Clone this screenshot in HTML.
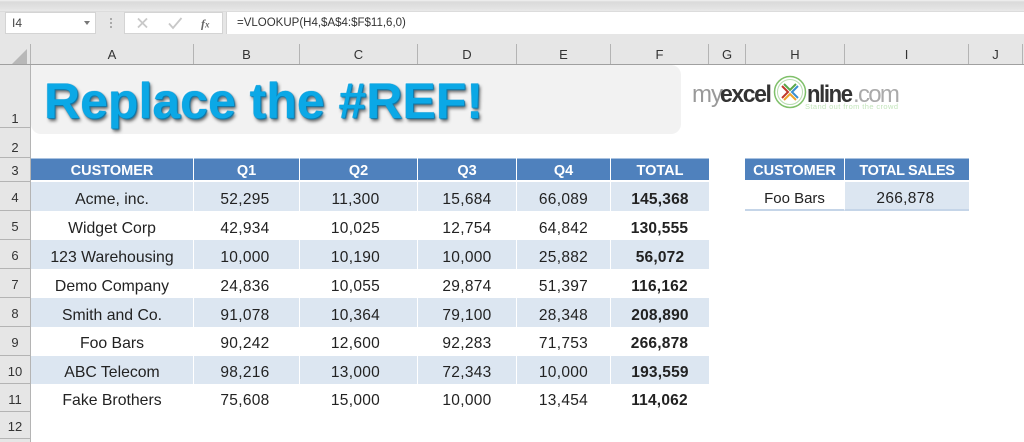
<!DOCTYPE html>
<html><head><meta charset="utf-8">
<style>
html,body{margin:0;padding:0;background:#fff}
body{width:1024px;height:442px;position:relative;overflow:hidden;font-family:"Liberation Sans",sans-serif;color:#222}
.a{position:absolute}
.ch{position:absolute;top:44px;height:20px;line-height:21px;text-align:center;font-size:13px;color:#333;border-right:1px solid #b4b4b4;box-sizing:border-box}
.rh{position:absolute;left:0;width:30px;text-align:center;font-size:13px;color:#333;border-bottom:1px solid #b4b4b4;box-sizing:border-box;background:#e6e6e6}
table{position:absolute;border-collapse:separate;border-spacing:0;table-layout:fixed}
td{padding:6px 0 0;text-align:center;font-size:15.8px;height:29px;border-right:1px solid #fff;border-bottom:0;box-sizing:border-box;white-space:nowrap;color:#222}
tr.h td{background:#4f81bd;color:#fff;font-weight:bold;height:24px;padding-top:4px;font-size:14.5px;border-bottom:2px solid #fff;box-shadow:inset 0 1px 0 #a9c2e0}
tr.b td{background:#dce6f1}
tr.u td{padding-top:4px}
tr.s td{height:28px;padding-top:5px}
td.n{font-size:15.5px;letter-spacing:.3px}
td.t{font-size:15.5px;font-weight:bold;letter-spacing:.2px}
td:nth-child(2).n{padding-right:3px}
td:nth-child(3).n{padding-right:6px}
</style></head>
<body>
<div class="a" style="left:0;top:0;width:1024px;height:65px;background:#e6e6e6"></div>
<div class="a" style="left:0;top:0;width:1024px;height:12px;background:linear-gradient(#f2f2f2 0,#dadada 2px,#e2e2e2 8px,#e9e9e9 11px,#cfcfcf 12px)"></div>
<div class="a" style="left:5px;top:12px;width:91px;height:22px;background:#fff;border:1px solid #d4d4d4;box-sizing:border-box;font-size:12px;line-height:21px;padding-left:6px;color:#444">I4</div>
<div class="a" style="left:84px;top:21px;width:0;height:0;border-left:3.5px solid transparent;border-right:3.5px solid transparent;border-top:4px solid #777"></div>
<div class="a" style="left:110px;top:18px;width:2px;height:2px;background:#aaa;box-shadow:0 4px 0 #aaa,0 8px 0 #aaa"></div>
<div class="a" style="left:124px;top:12px;width:99px;height:22px;background:#fff;border:1px solid #d4d4d4;box-sizing:border-box"></div>
<svg class="a" style="left:124px;top:12px" width="99" height="22" fill="none"><path d="M14 6.500L23 15.500M23 6.500L14 15.500" stroke="#c8c8c8" stroke-width="1.800"/><path d="M45 11.500L49 16L57.500 6" stroke="#c8c8c8" stroke-width="1.800"/><text x="77" y="15.500" font-family="Liberation Serif,serif" font-style="italic" font-weight="bold" font-size="12" fill="#666">f<tspan font-size="9">x</tspan></text></svg>
<div class="a" style="left:226px;top:12px;width:798px;height:22px;background:#fff;border-left:1px solid #d4d4d4;box-sizing:border-box;font-size:11.500px;line-height:22px;padding-left:10px;color:#333;white-space:nowrap">=VLOOKUP(H4,$A$4:$F$11,6,0)</div>

<svg class="a" style="left:0;top:44px" width="31" height="21"><path d="M12 20H27V5Z" fill="#b8b8b8"/></svg>
<div class="a" style="left:30px;top:44px;width:1px;height:20px;background:#b4b4b4"></div>
<div class="ch" style="left:31px;width:163px">A</div>
<div class="ch" style="left:194px;width:106px">B</div>
<div class="ch" style="left:300px;width:118px">C</div>
<div class="ch" style="left:418px;width:99px">D</div>
<div class="ch" style="left:517px;width:94px">E</div>
<div class="ch" style="left:611px;width:98px">F</div>
<div class="ch" style="left:709px;width:37px">G</div>
<div class="ch" style="left:746px;width:99px">H</div>
<div class="ch" style="left:845px;width:124px">I</div>
<div class="ch" style="left:969px;width:54px">J</div>
<div class="a" style="left:0;top:64px;width:1024px;height:1px;background:#a0a0a0"></div>

<div class="rh" style="top:65px;height:63px;line-height:107px">1</div>
<div class="rh" style="top:128px;height:30px;line-height:40px">2</div>
<div class="rh" style="top:158px;height:24px;line-height:25px">3</div>
<div class="rh" style="top:182px;height:29px;line-height:32px">4</div>
<div class="rh" style="top:211px;height:29px;line-height:32px">5</div>
<div class="rh" style="top:240px;height:29px;line-height:32px">6</div>
<div class="rh" style="top:269px;height:29px;line-height:32px">7</div>
<div class="rh" style="top:298px;height:29px;line-height:32px">8</div>
<div class="rh" style="top:327px;height:29px;line-height:32px">9</div>
<div class="rh" style="top:356px;height:28px;line-height:32px">10</div>
<div class="rh" style="top:384px;height:28px;line-height:32px">11</div>
<div class="rh" style="top:412px;height:27px;line-height:30px">12</div>
<div class="rh" style="top:439px;height:3px;border-bottom:0"></div>
<div class="a" style="left:30px;top:65px;width:1px;height:377px;background:#b4b4b4"></div>

<div class="a" style="left:31px;top:65px;width:650px;height:69px;background:#f2f2f2;border-radius:0 10px 10px 10px"></div>
<div class="a" style="left:44px;top:66px;font-size:50px;line-height:70px;font-weight:bold;color:#0ba8e6;white-space:nowrap;text-shadow:0 0 1px #0a79ad,1px 1px 1px #0a79ad,2px 3px 3px #666,-1px -1px 1px #fff">Replace the #REF!</div>

<div class="a" style="left:692px;top:80px;font-size:24px;line-height:30px;color:#999;white-space:nowrap;letter-spacing:-1px">my</div>
<div class="a" style="left:720px;top:80px;font-size:24px;line-height:30px;font-weight:bold;color:#333;white-space:nowrap;letter-spacing:-1.500px;transform:scaleX(.96);transform-origin:0 0">excel</div>
<svg class="a" style="left:772px;top:75px" width="36" height="36" fill="none"><circle cx="18" cy="17" r="15.500" stroke="#7fc06a" stroke-width="1.500"/><circle cx="18" cy="17" r="12.500" stroke="#b7dcae" stroke-width="1"/><path d="M12 9L18 15L24 9" stroke="#5aa84a" stroke-width="2"/><path d="M10 11L16 17L10 23" stroke="#c0392b" stroke-width="2"/><path d="M26 11L20 17L26 23" stroke="#3b8fd0" stroke-width="2"/><path d="M12 25L18 19L24 25" stroke="#eda52c" stroke-width="2"/></svg>
<div class="a" style="left:807px;top:80px;font-size:24px;line-height:30px;font-weight:bold;color:#333;white-space:nowrap;letter-spacing:-1.500px;transform:scaleX(.92);transform-origin:0 0">nline</div>
<div class="a" style="left:853px;top:80px;font-size:24px;line-height:30px;color:#aaa;white-space:nowrap;letter-spacing:-1.700px">.com</div>
<div class="a" style="left:805px;top:102px;font-size:7.500px;line-height:10px;color:#c4e6bc;white-space:nowrap;letter-spacing:.4px">Stand out from the crowd</div>

<table style="left:31px;top:158px;width:678px">
<colgroup><col style="width:163px"><col style="width:106px"><col style="width:118px"><col style="width:99px"><col style="width:94px"><col style="width:98px"></colgroup>
<tr class="h"><td>CUSTOMER</td><td>Q1</td><td>Q2</td><td>Q3</td><td>Q4</td><td style="border-right:0">TOTAL</td></tr>
<tr class="b"><td>Acme, inc.</td><td class="n">52,295</td><td class="n">11,300</td><td class="n">15,684</td><td class="n">66,089</td><td class="t" style="border-right:0">145,368</td></tr>
<tr><td>Widget Corp</td><td class="n">42,934</td><td class="n">10,025</td><td class="n">12,754</td><td class="n">64,842</td><td class="t">130,555</td></tr>
<tr class="b"><td>123 Warehousing</td><td class="n">10,000</td><td class="n">10,190</td><td class="n">10,000</td><td class="n">25,882</td><td class="t" style="border-right:0">56,072</td></tr>
<tr><td>Demo Company</td><td class="n">24,836</td><td class="n">10,055</td><td class="n">29,874</td><td class="n">51,397</td><td class="t">116,162</td></tr>
<tr class="b"><td>Smith and Co.</td><td class="n">91,078</td><td class="n">10,364</td><td class="n">79,100</td><td class="n">28,348</td><td class="t" style="border-right:0">208,890</td></tr>
<tr class="u"><td>Foo Bars</td><td class="n">90,242</td><td class="n">12,600</td><td class="n">92,283</td><td class="n">71,753</td><td class="t">266,878</td></tr>
<tr class="b s"><td>ABC Telecom</td><td class="n">98,216</td><td class="n">13,000</td><td class="n">72,343</td><td class="n">10,000</td><td class="t" style="border-right:0">193,559</td></tr>
<tr class="s"><td>Fake Brothers</td><td class="n">75,608</td><td class="n">15,000</td><td class="n">10,000</td><td class="n">13,454</td><td class="t">114,062</td></tr>
</table>

<table style="left:745px;top:158px;width:224px">
<colgroup><col style="width:100px"><col style="width:124px"></colgroup>
<tr class="h"><td>CUSTOMER</td><td style="border-right:0;letter-spacing:-.35px">TOTAL SALES</td></tr>
<tr><td style="border-bottom:2px solid #c5d5e8;font-size:15px">Foo Bars</td><td class="n" style="background:#dce6f1;border-right:0;border-bottom:2px solid #c5d5e8">266,878</td></tr>
</table>
</body></html>
